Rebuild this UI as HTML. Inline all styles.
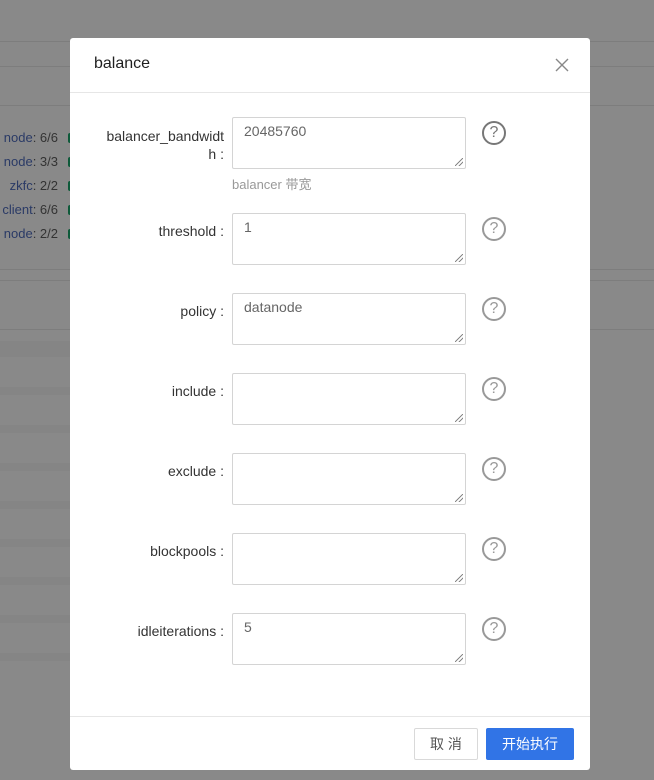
<!DOCTYPE html>
<html><head><meta charset="utf-8"><style>
*{box-sizing:border-box;margin:0;padding:0}
body{width:654px;height:780px;overflow:hidden;background:#898989;font-family:"Liberation Sans","Noto Sans CJK SC",sans-serif;position:relative}
.hl{position:absolute;left:0;width:654px;height:1px;background:#7d7d7d}
.st{position:absolute;left:0;width:70px;height:8px;background:#858585}
.bg{position:absolute;right:596px;font-size:13px;color:#2a3a66;white-space:nowrap}
.bg span{color:#333}
.dot{position:absolute;left:68px;width:4px;height:10px;border-radius:3px;background:#0e5a3a}
.modal{position:absolute;left:70px;top:38px;width:520px;height:732px;background:#fff;border-radius:3px}
.title{position:absolute;left:24px;top:17px;font-size:16px;color:#1f1f1f}
.hd{position:absolute;left:0;top:54px;width:520px;height:1px;background:#e6e6e6}
.ft{position:absolute;left:0;top:678px;width:520px;height:1px;background:#e6e6e6}
.lab{position:absolute;right:366px;font-size:14px;color:#333;text-align:right;line-height:18px}
.ta{position:absolute;left:162px;width:234px;height:52px;border:1px solid #d4d4d4;border-radius:2px;font-size:14px;color:#666;padding:5px 11px}
.ta::after{content:"";position:absolute;right:2px;bottom:2px;width:8px;height:8px;background:linear-gradient(135deg,transparent 45%,#888 45%,#888 55%,transparent 55%,transparent 70%,#888 70%,#888 80%,transparent 80%)}
.q{position:absolute;left:412px;width:24px;height:24px;border:2px solid #999;border-radius:50%;color:#999;font-size:16px;text-align:center;line-height:20px}
.btn{position:absolute;top:690px;height:32px;border-radius:2px;font-size:14px;text-align:center;line-height:30px}
</style></head><body>
<div class="hl" style="top:41px"></div>
<div class="hl" style="top:66px"></div>
<div class="hl" style="top:105px"></div>
<div class="hl" style="top:269px"></div>
<div class="hl" style="top:280px"></div>
<div class="hl" style="top:329px"></div>
<div class="st" style="top:341px;height:16px"></div>
<div class="st" style="top:387px"></div>
<div class="st" style="top:425px"></div>
<div class="st" style="top:463px"></div>
<div class="st" style="top:501px"></div>
<div class="st" style="top:539px"></div>
<div class="st" style="top:577px"></div>
<div class="st" style="top:615px"></div>
<div class="st" style="top:653px"></div>
<div class="bg" style="top:130px">node<span>: 6/6</span></div><div class="dot" style="top:133px"></div>
<div class="bg" style="top:154px">node<span>: 3/3</span></div><div class="dot" style="top:157px"></div>
<div class="bg" style="top:178px">zkfc<span>: 2/2</span></div><div class="dot" style="top:181px"></div>
<div class="bg" style="top:202px">client<span>: 6/6</span></div><div class="dot" style="top:205px"></div>
<div class="bg" style="top:226px">node<span>: 2/2</span></div><div class="dot" style="top:229px"></div>
<div class="modal">
<div class="title">balance</div>
<svg style="position:absolute;left:485px;top:20px" width="14" height="14" viewBox="0 0 14 14"><path d="M1 1L13 13M13 1L1 13" stroke="#888" stroke-width="1.4"/></svg>
<div class="hd"></div>

<div class="lab" style="top:89px;width:120px">balancer_bandwidt<br>h :</div>
<div class="ta" style="top:79px">20485760</div>
<div class="q" style="top:83px;border-color:#777;color:#777">?</div>
<div style="position:absolute;left:162px;top:136px;font-size:13px;color:#999">balancer 带宽</div>

<div class="lab" style="top:184px">threshold :</div>
<div class="ta" style="top:175px">1</div><div class="q" style="top:179px">?</div>
<div class="lab" style="top:264px">policy :</div>
<div class="ta" style="top:255px">datanode</div><div class="q" style="top:259px">?</div>
<div class="lab" style="top:344px">include :</div>
<div class="ta" style="top:335px"></div><div class="q" style="top:339px">?</div>
<div class="lab" style="top:424px">exclude :</div>
<div class="ta" style="top:415px"></div><div class="q" style="top:419px">?</div>
<div class="lab" style="top:504px">blockpools :</div>
<div class="ta" style="top:495px"></div><div class="q" style="top:499px">?</div>
<div class="lab" style="top:584px">idleiterations :</div>
<div class="ta" style="top:575px">5</div><div class="q" style="top:579px">?</div>

<div class="ft"></div>
<div class="btn" style="left:344px;width:64px;border:1px solid #d9d9d9;color:#555">取 消</div>
<div class="btn" style="left:416px;width:88px;background:#3174e6;color:#fff;line-height:32px">开始执行</div>
</div>
</body></html>
